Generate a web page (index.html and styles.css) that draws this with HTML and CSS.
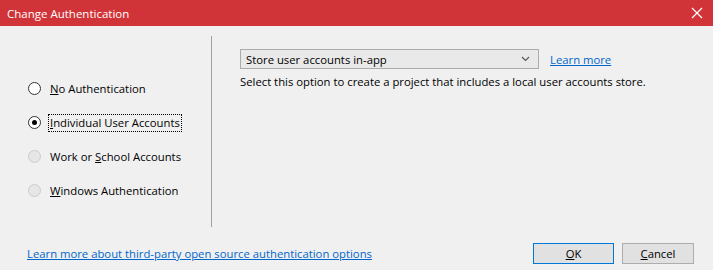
FILE: index.html
```
<!DOCTYPE html>
<html>
<head>
<meta charset="utf-8">
<link rel="stylesheet" href="styles.css">
</head>
<body>
<div class="dialog">
  <div class="titlebar">
    <span class="title">Change Authentication</span>
    <svg class="close" width="12" height="12" viewBox="0 0 12 12"><path d="M1 1 L11 11 M11 1 L1 11" stroke="#fff" stroke-width="1.2" fill="none"/></svg>
  </div>
  <div class="main">
    <div class="options">
      <div class="opt"><span class="radio"></span><span class="label"><u>N</u>o Authentication</span></div>
      <div class="opt"><span class="radio checked"></span><span class="label focus"><u>I</u>ndividual User Accounts</span></div>
      <div class="opt"><span class="radio disabled"></span><span class="label">Work or <u>S</u>chool Accounts</span></div>
      <div class="opt"><span class="radio disabled"></span><span class="label"><u>W</u>indows Authentication</span></div>
    </div>
    <div class="details">
      <div class="row">
        <div class="select"><span>Store user accounts in-app</span>
          <svg width="9" height="6" viewBox="0 0 9 6"><path d="M1 1 L4.5 4.5 L8 1" stroke="#555" stroke-width="1.1" fill="none"/></svg>
        </div>
        <a class="link" href="#">Learn more</a>
      </div>
      <p class="desc">Select this option to create a project that includes a local user accounts store.</p>
    </div>
  </div>
  <div class="footer">
    <a class="link" href="#">Learn more about third-party open source authentication options</a>
    <div class="buttons">
      <button class="btn default"><u>O</u>K</button>
      <button class="btn"><u>C</u>ancel</button>
    </div>
  </div>
</div>
</body>
</html>
```

FILE: styles.css
```
html, body {
  margin: 0;
  padding: 0;
  background: #f0f0f0;
}
body {
  font-family: "Open Sans", "Noto Sans", sans-serif;
  font-size: 11.3px;
  color: #000;
}
.dialog {
  width: 713px;
  height: 270px;
  display: flex;
  flex-direction: column;
}
.titlebar {
  height: 26px;
  background: #d13438;
  display: flex;
  align-items: center;
  justify-content: space-between;
  padding: 0 10px 0 7px;
  box-sizing: border-box;
}
.title {
  color: #fff;
  font-size: 11.5px;
}
.main {
  display: flex;
  margin-top: 10px;
  height: 191px;
}
.options {
  width: 183px;
  padding-left: 28px;
  border-right: 1px solid #a0a0a0;
  display: flex;
  flex-direction: column;
  padding-top: 44px;
  gap: 17px;
}
.opt {
  display: flex;
  align-items: center;
  height: 17px;
}
.radio {
  width: 11px;
  height: 11px;
  border: 1px solid #333;
  border-radius: 50%;
  background: #fff;
  margin-right: 7px;
  position: relative;
  flex: none;
}
.radio.checked::after {
  content: "";
  position: absolute;
  left: 3px;
  top: 3px;
  width: 5px;
  height: 5px;
  border-radius: 50%;
  background: #000;
}
.radio.disabled {
  border-color: #cccccc;
  background: #e6e6e6;
}
.label {
  padding: 0 1px;
  line-height: 16px;
  border: 1px dotted transparent;
}
.label.focus {
  border-color: #000;
}
.details {
  padding-left: 28px;
  padding-top: 13px;
}
.row {
  display: flex;
  align-items: center;
}
.select {
  width: 299px;
  height: 20px;
  box-sizing: border-box;
  border: 1px solid #acacac;
  background: #e9e9e9;
  display: flex;
  align-items: center;
  justify-content: space-between;
  padding: 0 8px 0 5px;
}
.row .link {
  margin-left: 11px;
}
.link {
  color: #0066cc;
  text-decoration: underline;
}
.desc {
  margin: 5px 0 0;
}
.footer {
  display: flex;
  justify-content: space-between;
  align-items: center;
  padding: 16px 19px 0 27px;
}
.buttons {
  display: flex;
  gap: 8px;
}
.btn {
  font-family: inherit;
  font-size: 11.3px;
  height: 21px;
  background: #e1e1e1;
  border: 1px solid #adadad;
  padding: 0;
  width: 72px;
}
.btn.default {
  border-color: #0078d7;
  width: 81px;
}
```
